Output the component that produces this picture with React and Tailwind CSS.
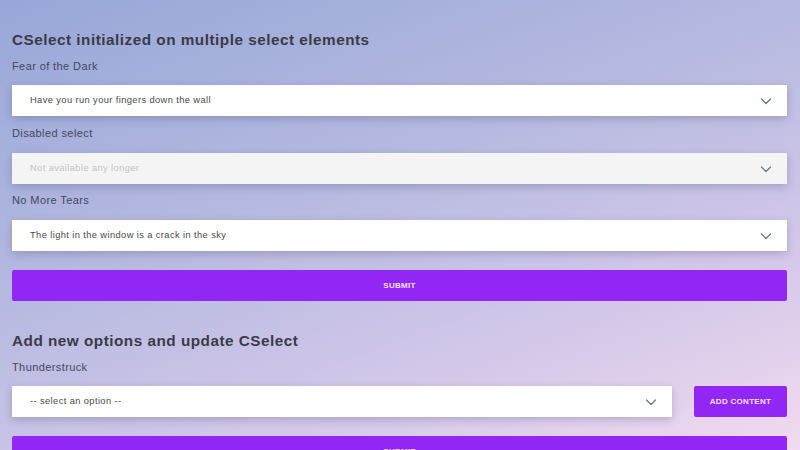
import React from 'react';

const Chevron = () => (
    <svg width="12" height="12" viewBox="0 0 12 12" fill="none" className="text-gray-500">
        <path d="M1.5 4l4.5 4.5L10.5 4" stroke="currentColor" strokeWidth="1.2" strokeLinecap="round" strokeLinejoin="round" />
    </svg>
);

const SelectBox = ({ value, disabled, className = '' }) => (
    <div
        className={`h-[31px] flex items-center justify-between pl-[18px] pr-[15px] shadow-[0_3px_8px_rgba(60,60,110,0.25)] ${
            disabled ? 'bg-[#f4f4f4] text-[#c4c4c4]' : 'bg-white text-[#4a4a4a]'
        } ${className}`}
    >
        <span className="text-[9.3px] tracking-[0.4px]">{value}</span>
        <Chevron />
    </div>
);

const Label = ({ children, className = '' }) => (
    <div className={`text-[11px] tracking-[0.4px] text-[#45475c] leading-[11px] ${className}`}>{children}</div>
);

const SubmitButton = ({ className = '' }) => (
    <button className={`w-full h-[31px] bg-[#9226f4] rounded-[2px] text-[8px] font-bold text-[#f3e0fb] tracking-[0.3px] ${className}`}>
        SUBMIT
    </button>
);

const Heading = ({ children, className = '' }) => (
    <h2 className={`text-[15.3px] font-bold tracking-[0.5px] text-[#3b3b48] leading-[16px] ${className}`}>{children}</h2>
);

export default function App() {
    return (
        <div
            className="w-[800px] h-[450px] overflow-hidden pl-[12px] pr-[13px] pt-[32px] bg-[linear-gradient(160deg,#97a7d8_0%,#b5b9e0_40%,#d6c9ea_75%,#f2dbf0_100%)]"
            style={{ fontFamily: '"Liberation Sans", Arial, sans-serif' }}
        >
            <Heading>CSelect initialized on multiple select elements</Heading>
            <Label className="mt-[13px]">Fear of the Dark</Label>
            <SelectBox className="mt-[13px]" value="Have you run your fingers down the wall" />
            <Label className="mt-[12px]">Disabled select</Label>
            <SelectBox className="mt-[14px]" disabled value="Not available any longer" />
            <Label className="mt-[11px]">No More Tears</Label>
            <SelectBox className="mt-[14px]" value="The light in the window is a crack in the sky" />
            <SubmitButton className="mt-[19px]" />

            <Heading className="mt-[32px]">Add new options and update CSelect</Heading>
            <Label className="mt-[13px]">Thunderstruck</Label>
            <div className="mt-[13px] flex gap-[22px]">
                <SelectBox className="flex-1" value="-- select an option --" />
                <button className="w-[93px] h-[31px] bg-[#9226f4] rounded-[2px] text-[8px] font-bold text-[#f3e0fb] tracking-[0.3px]">
                    ADD CONTENT
                </button>
            </div>
            <SubmitButton className="mt-[19px]" />
        </div>
    );
}
